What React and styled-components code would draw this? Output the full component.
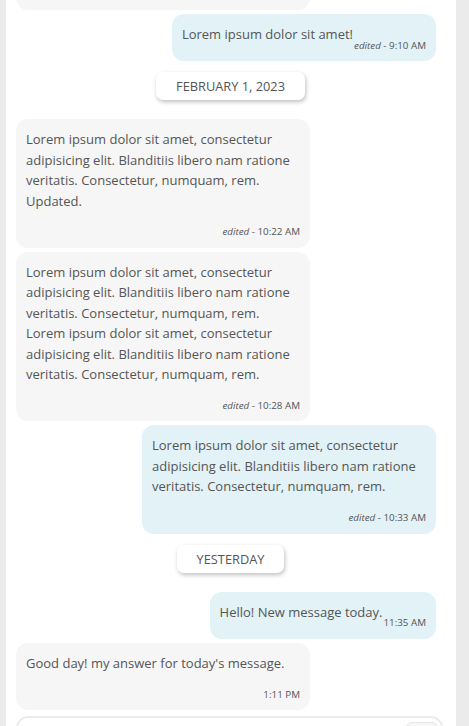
import React from "react";
import styled, { createGlobalStyle } from "styled-components";

const GlobalStyle = createGlobalStyle`
  html, body {
    margin: 0;
    padding: 0;
    height: 100%;
    overflow: hidden;
    background: #ebebeb;
  }
  body {
    font-family: "Open Sans", "Noto Sans", sans-serif;
    color: #555;
  }
  * { box-sizing: border-box; }
`;

const Panel = styled.div`
  width: 450px;
  margin-left: 6px;
  height: 100vh;
  background: #ffffff;
  display: flex;
  flex-direction: column;
  overflow: hidden;
`;

const MessageList = styled.div`
  height: 716px;
  flex: none;
  overflow: hidden;
  display: flex;
  flex-direction: column;
  justify-content: flex-end;
  gap: 4px;
  padding: 0 20px 6px 10px;
`;

const Row = styled.div`
  flex-shrink: 0;
  display: flex;
  justify-content: ${(p) => (p.$mine ? "flex-end" : "flex-start")};
`;

const Bubble = styled.div`
  display: flow-root;
  max-width: 70%;
  padding: 10px;
  border-radius: 12px;
  background: ${(p) => (p.$mine ? "#e2f2f6" : "#f6f6f6")};
  font-size: 13px;
  line-height: 20.4px;
  color: #555;
`;

const Text = styled.span`
  display: inline-block;
`;

const Meta = styled.span`
  float: right;
  margin-top: 15.5px;
  margin-left: 1px;
  font-size: 9.8px;
  line-height: 11.5px;
  white-space: nowrap;
  color: #555;
`;

const Edited = styled.em`
  font-style: italic;
`;

const DateRow = styled.div`
  flex-shrink: 0;
  display: flex;
  justify-content: center;
  padding-left: 9px;
  margin: 7px 0 15px;
`;

const DatePill = styled.div`
  background: #fff;
  border-radius: 7px;
  box-shadow: 1px 2px 4px rgba(0, 0, 0, 0.25);
  padding: 0 20px;
  height: 28px;
  line-height: 28px;
  font-size: 12.8px;
  text-transform: uppercase;
  color: #555;
`;

const Composer = styled.div`
  flex: none;
  margin: 0 13px 0 10px;
  height: 56px;
  border: 2px solid #ececec;
  border-radius: 12px;
  display: flex;
  justify-content: flex-end;
  padding: 4px 3px;
`;

const SendButton = styled.div`
  width: 32px;
  height: 32px;
  border: 1px solid #e6e6e6;
  background: #f7f7f7;
  border-radius: 6px;
`;

const items = [
  { type: "msg", text: "Lorem ipsum dolor sit amet, consectetur adipisicing elit. Blanditiis libero nam ratione veritatis. Consectetur, numquam, rem.", time: "9:02 AM", edited: false },
  { type: "msg", mine: true, text: "Lorem ipsum dolor sit amet!", time: "9:10 AM", edited: true },
  { type: "date", label: "February 1, 2023" },
  { type: "msg", text: "Lorem ipsum dolor sit amet, consectetur adipisicing elit. Blanditiis libero nam ratione veritatis. Consectetur, numquam, rem. Updated.", time: "10:22 AM", edited: true },
  { type: "msg", text: "Lorem ipsum dolor sit amet, consectetur adipisicing elit. Blanditiis libero nam ratione veritatis. Consectetur, numquam, rem. Lorem ipsum dolor sit amet, consectetur adipisicing elit. Blanditiis libero nam ratione veritatis. Consectetur, numquam, rem.", time: "10:28 AM", edited: true },
  { type: "msg", mine: true, text: "Lorem ipsum dolor sit amet, consectetur adipisicing elit. Blanditiis libero nam ratione veritatis. Consectetur, numquam, rem.", time: "10:33 AM", edited: true },
  { type: "date", label: "Yesterday" },
  { type: "msg", mine: true, text: "Hello! New message today.", time: "11:35 AM", edited: false },
  { type: "msg", text: "Good day! my answer for today's message.", time: "1:11 PM", edited: false },
];

function Message({ mine, text, time, edited }) {
  return (
    <Row $mine={mine}>
      <Bubble $mine={mine}>
        <Text>{text}</Text>
        <Meta>
          {edited && (
            <>
              <Edited>edited</Edited> -{" "}
            </>
          )}
          {time}
        </Meta>
      </Bubble>
    </Row>
  );
}

export default function App() {
  return (
    <>
      <GlobalStyle />
      <Panel>
        <MessageList>
          {items.map((it, i) =>
            it.type === "date" ? (
              <DateRow key={i}>
                <DatePill>{it.label}</DatePill>
              </DateRow>
            ) : (
              <Message key={i} {...it} />
            )
          )}
        </MessageList>
        <Composer>
          <SendButton />
        </Composer>
      </Panel>
    </>
  );
}
